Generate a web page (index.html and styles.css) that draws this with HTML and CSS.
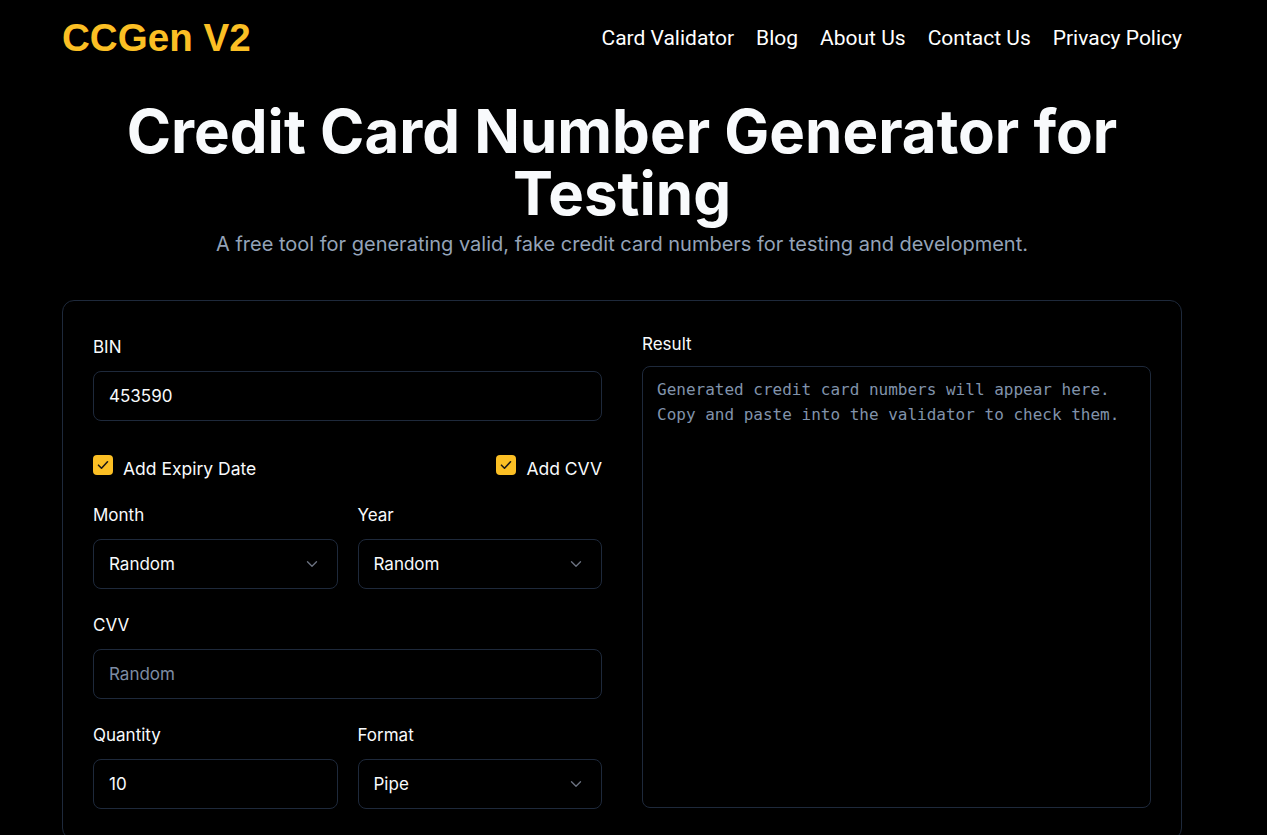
FILE: index.html
```html
<!DOCTYPE html>
<html lang="en">
<head>
    <meta charset="UTF-8">
    <meta name="viewport" content="width=device-width, initial-scale=1.0">
    <title>CCGen V2 - Credit Card Number Generator</title>
    <link rel="stylesheet" href="styles.css">
</head>
<body>
    <div class="container">
        <!-- Header -->
        <header class="header">
            <a href="#" class="logo">CCGen V2</a>
            <nav class="nav">
                <a href="#">Card Validator</a>
                <a href="#">Blog</a>
                <a href="#">About Us</a>
                <a href="#">Contact Us</a>
                <a href="#">Privacy Policy</a>
            </nav>
        </header>

        <!-- Hero -->
        <section class="hero">
            <h1>Credit Card Number Generator for Testing</h1>
            <p>A free tool for generating valid, fake credit card numbers for testing and development.</p>
        </section>

        <!-- Generator card -->
        <main class="card">
            <div class="form">
                <div class="field">
                    <label class="label" for="bin">BIN</label>
                    <input id="bin" class="input" type="text" value="453590">
                </div>

                <div class="checks">
                    <label class="check">
                        <span class="box">
                            <svg viewBox="0 0 20 20" fill="none" stroke="currentColor" stroke-width="1.6" stroke-linecap="round" stroke-linejoin="round"><path d="M5.5 10.2l3 3 6-6.4"/></svg>
                        </span>
                        Add Expiry Date
                    </label>
                    <label class="check">
                        <span class="box">
                            <svg viewBox="0 0 20 20" fill="none" stroke="currentColor" stroke-width="1.6" stroke-linecap="round" stroke-linejoin="round"><path d="M5.5 10.2l3 3 6-6.4"/></svg>
                        </span>
                        Add CVV
                    </label>
                </div>

                <div class="row row-dates">
                    <div class="field">
                        <label class="label" for="month">Month</label>
                        <div class="select-wrap">
                            <select id="month" class="input select">
                                <option>Random</option>
                            </select>
                            <svg class="chevron" viewBox="0 0 20 20" fill="none" stroke="currentColor" stroke-width="1.5" stroke-linecap="round" stroke-linejoin="round"><path d="M5 7.5l5 5 5-5"/></svg>
                        </div>
                    </div>
                    <div class="field">
                        <label class="label" for="year">Year</label>
                        <div class="select-wrap">
                            <select id="year" class="input select">
                                <option>Random</option>
                            </select>
                            <svg class="chevron" viewBox="0 0 20 20" fill="none" stroke="currentColor" stroke-width="1.5" stroke-linecap="round" stroke-linejoin="round"><path d="M5 7.5l5 5 5-5"/></svg>
                        </div>
                    </div>
                </div>

                <div class="field spaced">
                    <label class="label" for="cvv">CVV</label>
                    <input id="cvv" class="input" type="text" placeholder="Random">
                </div>

                <div class="row spaced">
                    <div class="field">
                        <label class="label" for="qty">Quantity</label>
                        <input id="qty" class="input" type="number" value="10">
                    </div>
                    <div class="field">
                        <label class="label" for="format">Format</label>
                        <div class="select-wrap">
                            <select id="format" class="input select">
                                <option>Pipe</option>
                                <option>CSV</option>
                                <option>JSON</option>
                            </select>
                            <svg class="chevron" viewBox="0 0 20 20" fill="none" stroke="currentColor" stroke-width="1.5" stroke-linecap="round" stroke-linejoin="round"><path d="M5 7.5l5 5 5-5"/></svg>
                        </div>
                    </div>
                </div>
            </div>

            <div class="result">
                <label class="label result-label" for="result">Result</label>
                <textarea id="result" class="output" placeholder="Generated credit card numbers will appear here.&#10;Copy and paste into the validator to check them."></textarea>
            </div>
        </main>
    </div>
</body>
</html>
```

FILE: styles.css
```css
* {
    margin: 0;
    padding: 0;
    box-sizing: border-box;
}

body {
    background: #000;
    color: #f8fafc;
    font-family: Inter, "Noto Sans", sans-serif;
    overflow: hidden;
}

a {
    color: inherit;
    text-decoration: none;
}

.container {
    width: 1120px;
    margin-left: 62px;
}

/* Header */
.header {
    height: 76px;
    display: flex;
    align-items: center;
    justify-content: space-between;
}

.logo {
    font-family: "Liberation Sans", Arial, sans-serif;
    font-weight: 700;
    font-size: 38.6px;
    color: #fbbf24;
}

.nav {
    display: flex;
    gap: 22px;
    font-family: Roboto, sans-serif;
    font-size: 21px;
    color: #fff;
}

/* Hero */
.hero {
    text-align: center;
    padding-top: 24px;
}

.hero h1 {
    font-size: 60px;
    line-height: 62px;
    font-weight: 700;
    padding: 0 40px;
}

.hero p {
    margin-top: 6px;
    font-size: 20px;
    line-height: 28px;
    color: #94a3b8;
}

/* Card */
.card {
    margin-top: 42px;
    border: 1px solid #1e293b;
    border-radius: 12px;
    padding: 31px 30px 30px;
    display: grid;
    grid-template-columns: 1fr 1fr;
    gap: 40px;
}

.field {
    display: flex;
    flex-direction: column;
}

.label {
    font-size: 17px;
    line-height: 30px;
    font-weight: 400;
    margin-bottom: 9px;
}

.input {
    height: 50px;
    width: 100%;
    background: #000;
    border: 1px solid #1e293b;
    border-radius: 8px;
    padding: 0 15px;
    color: #f8fafc;
    font-family: Inter, "Noto Sans", sans-serif;
    font-size: 17px;
    outline: none;
}

.input::placeholder {
    color: #7d8ca3;
}

.input[type=number]::-webkit-inner-spin-button {
    -webkit-appearance: none;
}

.select {
    appearance: none;
    -webkit-appearance: none;
}

.select-wrap {
    position: relative;
}

.chevron {
    position: absolute;
    right: 17px;
    top: 16px;
    width: 18px;
    height: 18px;
    color: #6b7280;
    pointer-events: none;
}

.checks {
    margin-top: 34px;
    display: flex;
    justify-content: space-between;
}

.check {
    display: flex;
    align-items: flex-start;
    gap: 10px;
    font-size: 17.5px;
    line-height: 28px;
    font-weight: 400;
}

.box {
    width: 20px;
    height: 20px;
    border-radius: 4px;
    background: #fbbf24;
    color: #1c1917;
    display: flex;
}

.box svg {
    width: 20px;
    height: 20px;
}

.row {
    display: grid;
    grid-template-columns: 1fr 1fr;
    gap: 20px;
}

.row-dates {
    margin-top: 17px;
}

.spaced {
    margin-top: 21px;
}

.form {
    display: flex;
    flex-direction: column;
}

/* Result */
.result {
    display: flex;
    flex-direction: column;
}

.result-label {
    line-height: 24px;
    margin-bottom: 10px;
}

.output {
    height: 442px;
    background: #000;
    border: 1px solid #1e293b;
    border-radius: 8px;
    padding: 10px 14px;
    font-family: "DejaVu Sans Mono", monospace;
    font-size: 16px;
    line-height: 25px;
    color: #f8fafc;
    resize: none;
    outline: none;
}

.output::placeholder {
    color: #8193ab;
}
```
